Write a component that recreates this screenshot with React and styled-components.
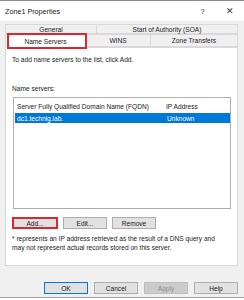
import React from "react";
import styled, { createGlobalStyle } from "styled-components";

const Global = createGlobalStyle`
  *, *::before, *::after { box-sizing: border-box; }
  html, body { margin: 0; padding: 0; background: #ffffff; }
  body { font-family: "Liberation Sans", Arial, sans-serif; color: #1a1a1a; }
`;

const Window = styled.div`
  width: 244px;
  height: 298px;
  display: flex;
  flex-direction: column;
  background: #f0f0f0;
  border-top: 1px solid #8c8c8c;
  border-bottom: 1px solid #a0a0a0;
`;

const TitleBar = styled.div`
  height: 20px;
  display: flex;
  align-items: center;
  background: #ffffff;
  padding-left: 5px;
  font-size: 7.2px;
`;

const Title = styled.div`
  flex: 1;
`;

const TitleButton = styled.div`
  width: 27px;
  height: 20px;
  display: flex;
  align-items: center;
  justify-content: center;
  font-size: ${(p) => (p.$big ? "9px" : "7.4px")};
  color: #333;
  &:last-child { margin-right: 1px; }
`;

const Body = styled.div`
  flex: 1;
  display: flex;
  flex-direction: column;
  padding: 3px 6px 0 5px;
  font-size: 6.6px;
`;

const Tabs = styled.div`
  display: flex;
  flex-direction: column;
  height: 23px;
`;

const TabRow = styled.div`
  display: flex;
  height: ${(p) => p.$h}px;
`;

const Tab = styled.div`
  position: relative;
  width: ${(p) => (p.$w ? `${p.$w}px` : "auto")};
  flex: ${(p) => (p.$w ? "none" : "1")};
  display: flex;
  align-items: center;
  justify-content: center;
  background: ${(p) => (p.$active ? "#ffffff" : "#f0f0f0")};
  border: 1px solid #d9d9d9;
  border-bottom: ${(p) => (p.$active ? "none" : "1px solid #d9d9d9")};
  margin-left: -1px;
  &:first-child { margin-left: 0; }
  z-index: ${(p) => (p.$active ? 2 : 1)};
  margin-bottom: ${(p) => (p.$active ? "-1px" : "0")};
`;

const Highlight = styled.span`
  position: absolute;
  left: 1px;
  right: -2px;
  top: -2px;
  bottom: -1px;
  border: 2px solid #e0252e;
  pointer-events: none;
`;

const Panel = styled.div`
  height: 219px;
  background: #ffffff;
  border: 1px solid #d9d9d9;
  padding: 7px 6px 0 6px;
  display: flex;
  flex-direction: column;
`;

const Line = styled.div`
  line-height: 9px;
  margin-top: ${(p) => p.$mt || 0}px;
  white-space: nowrap;
`;

const List = styled.div`
  margin: 4px 0 0 1px;
  height: 112px;
  border: 1px solid #adadad;
  background: #fff;
  padding-top: 1px;
`;

const ListRow = styled.div`
  display: grid;
  grid-template-columns: 149px 1fr;
  height: ${(p) => (p.$header ? 14 : 10)}px;
  align-items: center;
  background: ${(p) => (p.$selected ? "#0078d7" : "transparent")};
  color: ${(p) => (p.$selected ? "#ffffff" : "#1a1a1a")};
  margin: ${(p) => (p.$selected ? "0 0 0 1px" : "0")};
`;

const Cell = styled.div`
  padding-left: ${(p) => (p.$pl != null ? p.$pl : 3)}px;
  white-space: nowrap;
  overflow: hidden;
  height: 100%;
  display: flex;
  align-items: center;
`;

const ButtonRow = styled.div`
  display: flex;
  gap: ${(p) => p.$gap}px;
  margin-top: ${(p) => p.$mt || 0}px;
  justify-content: ${(p) => (p.$end ? "flex-end" : "flex-start")};
`;

const Button = styled.div`
  width: ${(p) => p.$w || 44}px;
  height: 12px;
  display: flex;
  align-items: center;
  justify-content: center;
  font-size: 6.6px;
  background: ${(p) => (p.$disabled ? "#cccccc" : "#e1e1e1")};
  color: ${(p) => (p.$disabled ? "#8c8c8c" : "#1a1a1a")};
  border: ${(p) =>
    p.$red
      ? "2px solid #e0252e"
      : p.$default
      ? "1px solid #0078d7"
      : p.$disabled
      ? "1px solid #bfbfbf"
      : "1px solid #adadad"};
`;

export default function App() {
  return (
    <>
      <Global />
      <Window>
        <TitleBar>
          <Title>Zone1 Properties</Title>
          <TitleButton>?</TitleButton>
          <TitleButton $big>✕</TitleButton>
        </TitleBar>
        <Body>
          <Tabs>
            <TabRow $h={10}>
              <Tab $w={92}>General</Tab>
              <Tab>Start of Authority (SOA)</Tab>
            </TabRow>
            <TabRow $h={13}>
              <Tab $w={81} $active>
                Name Servers
                <Highlight />
              </Tab>
              <Tab $w={66}>WINS</Tab>
              <Tab>Zone Transfers</Tab>
            </TabRow>
          </Tabs>
          <Panel>
            <Line>To add name servers to the list, click Add.</Line>
            <Line $mt={20}>Name servers:</Line>
            <List>
              <ListRow $header>
                <Cell>Server Fully Qualified Domain Name (FQDN)</Cell>
                <Cell>IP Address</Cell>
              </ListRow>
              <ListRow $selected>
                <Cell $pl={2}>dc1.technig.lab.</Cell>
                <Cell>Unknown</Cell>
              </ListRow>
            </List>
            <ButtonRow $gap={5} $mt={8}>
              <Button $w={46} $red>Add...</Button>
              <Button>Edit...</Button>
              <Button>Remove</Button>
            </ButtonRow>
            <Line $mt={5}>* represents an IP address retrieved as the result of a DNS query and</Line>
            <Line>may not represent actual records stored on this server.</Line>
          </Panel>
          <ButtonRow $gap={6} $mt={16} $end>
            <Button $default>OK</Button>
            <Button>Cancel</Button>
            <Button $disabled>Apply</Button>
            <Button>Help</Button>
          </ButtonRow>
        </Body>
      </Window>
    </>
  );
}
